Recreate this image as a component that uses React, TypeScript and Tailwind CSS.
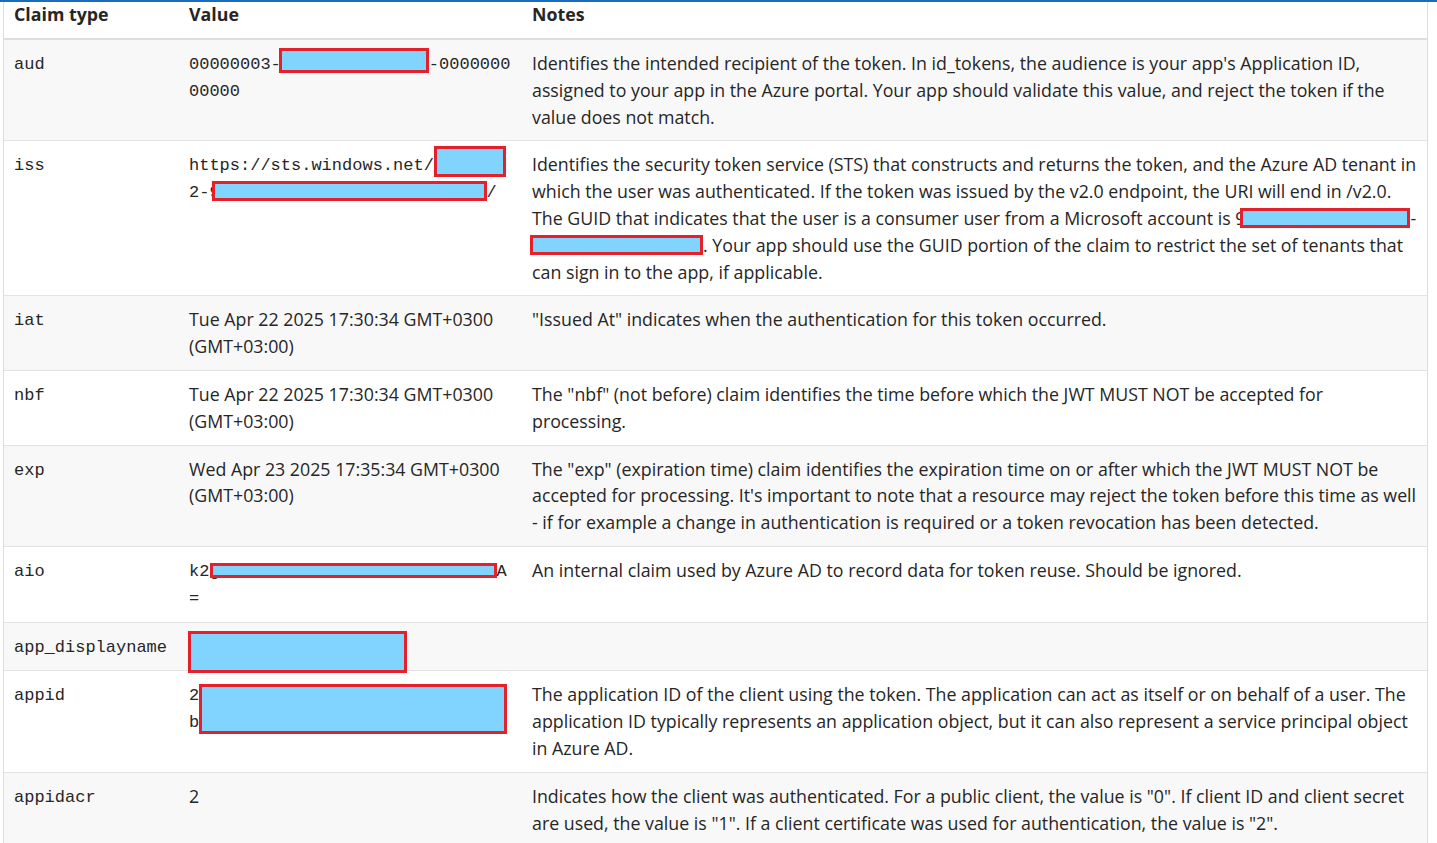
import React from "react";

const sans = "font-['Open_Sans',sans-serif] text-[17.8px]";
const mono = "font-['Liberation_Mono',monospace] text-[17px]";

function Redact({ className }: { className: string }) {
  return (
    <span
      className={`inline-block align-top border-[3px] border-[#e5202a] bg-[#80d4ff] ${className}`}
    />
  );
}

function Lines({ children }: { children: React.ReactNode }) {
  return <div className="whitespace-nowrap">{children}</div>;
}

interface Row {
  claim: string;
  value: React.ReactNode;
  notes: React.ReactNode;
  valueMono?: boolean;
  extra?: string;
}

const rows: Row[] = [
  {
    claim: "aud",
    valueMono: true,
    value: (
      <>
        <Lines>
          00000003-
          <Redact className="-ml-[2px] mt-[-4px] h-[25px] w-[150px]" />
          -0000000
        </Lines>
        <Lines>00000</Lines>
      </>
    ),
    notes: (
      <>
        <Lines>
          Identifies the intended recipient of the token. In id_tokens, the audience is your app's Application ID,
        </Lines>
        <Lines>
          assigned to your app in the Azure portal. Your app should validate this value, and reject the token if the
        </Lines>
        <Lines>value does not match.</Lines>
      </>
    ),
  },
  {
    claim: "iss",
    valueMono: true,
    value: (
      <>
        <Lines>
          https://sts.windows.net/
          <Redact className="mt-[-7px] h-[31px] w-[72px]" />
        </Lines>
        <Lines>
          2-9
          <Redact className="-ml-[8px] mt-[1px] h-[20px] w-[275px]" />/
        </Lines>
      </>
    ),
    notes: (
      <>
        <Lines>
          Identifies the security token service (STS) that constructs and returns the token, and the Azure AD tenant in
        </Lines>
        <Lines>
          which the user was authenticated. If the token was issued by the v2.0 endpoint, the URI will end in /v2.0.
        </Lines>
        <Lines>
          The GUID that indicates that the user is a consumer user from a Microsoft account is 9
          <Redact className="-ml-[5px] mt-[3px] h-[20px] w-[170px]" />-
        </Lines>
        <Lines>
          <Redact className="-ml-[2px] mt-[3px] h-[20px] w-[173px]" />. Your app should use the GUID portion of the
          claim to restrict the set of tenants that
        </Lines>
        <Lines>can sign in to the app, if applicable.</Lines>
      </>
    ),
  },
  {
    claim: "iat",
    value: (
      <>
        <Lines>Tue Apr 22 2025 17:30:34 GMT+0300</Lines>
        <Lines>(GMT+03:00)</Lines>
      </>
    ),
    notes: <Lines>"Issued At" indicates when the authentication for this token occurred.</Lines>,
  },
  {
    claim: "nbf",
    value: (
      <>
        <Lines>Tue Apr 22 2025 17:30:34 GMT+0300</Lines>
        <Lines>(GMT+03:00)</Lines>
      </>
    ),
    notes: (
      <>
        <Lines>
          The "nbf" (not before) claim identifies the time before which the JWT MUST NOT be accepted for
        </Lines>
        <Lines>processing.</Lines>
      </>
    ),
  },
  {
    claim: "exp",
    value: (
      <>
        <Lines>Wed Apr 23 2025 17:35:34 GMT+0300</Lines>
        <Lines>(GMT+03:00)</Lines>
      </>
    ),
    notes: (
      <>
        <Lines>
          The "exp" (expiration time) claim identifies the expiration time on or after which the JWT MUST NOT be
        </Lines>
        <Lines>
          accepted for processing. It's important to note that a resource may reject the token before this time as well
        </Lines>
        <Lines>
          - if for example a change in authentication is required or a token revocation has been detected.
        </Lines>
      </>
    ),
  },
  {
    claim: "aio",
    valueMono: true,
    extra: "pb-[9px]",
    value: (
      <>
        <Lines>
          k2g
          <Redact className="-ml-[10px] mt-[4px] h-[15px] w-[287px]" />A
        </Lines>
        <Lines>=</Lines>
      </>
    ),
    notes: (
      <Lines>An internal claim used by Azure AD to record data for token reuse. Should be ignored.</Lines>
    ),
  },
  {
    claim: "app_displayname",
    extra: "pb-[11px]",
    value: (
      <Lines>
        <Redact className="-ml-[1px] mt-[-2px] mb-[-14px] h-[42px] w-[219px]" />
      </Lines>
    ),
    notes: null,
  },
  {
    claim: "appid",
    valueMono: true,
    value: (
      <>
        <Lines>
          2
          <Redact className="mt-[1px] mb-[-25px] h-[50px] w-[308px]" />
        </Lines>
        <Lines>b</Lines>
      </>
    ),
    notes: (
      <>
        <Lines>
          The application ID of the client using the token. The application can act as itself or on behalf of a user. The
        </Lines>
        <Lines>
          application ID typically represents an application object, but it can also represent a service principal object
        </Lines>
        <Lines>in Azure AD.</Lines>
      </>
    ),
  },
  {
    claim: "appidacr",
    value: <Lines>2</Lines>,
    notes: (
      <>
        <Lines>
          Indicates how the client was authenticated. For a public client, the value is "0". If client ID and client secret
        </Lines>
        <Lines>
          are used, the value is "1". If a client certificate was used for authentication, the value is "2".
        </Lines>
      </>
    ),
  },
];

export default function App() {
  return (
    <div className={`h-[843px] w-[1437px] overflow-hidden bg-white text-[#262626] ${sans}`}>
      <div className="h-[2px] bg-[#1a6cc0]" />
      <div className="ml-[3px] w-[1425px] border-x border-[#dddddd]">
        <div className="grid grid-cols-[174px_343px_1fr] border-b-2 border-[#dedede] pb-[12px] font-bold leading-[24px]">
          <div className="pl-[10px]">Claim type</div>
          <div className="pl-[11px]">Value</div>
          <div className="pl-[11px]">Notes</div>
        </div>
        {rows.map((r, i) => (
          <div
            key={r.claim}
            className={`grid grid-cols-[174px_343px_1fr] border-b border-[#e2e2e2] leading-[26.8px] ${
              i % 2 === 0 ? "bg-[#f8f8f8]" : "bg-white"
            }`}
          >
            <div className={`pt-[12px] pb-[8px] pl-[10px] ${mono}`}>{r.claim}</div>
            <div
              className={`pl-[11px] ${r.valueMono ? `pt-[12px] pb-[8px] ${mono}` : "pt-[10px] pb-[10px]"} ${r.extra ?? ""}`}
            >
              {r.value}
            </div>
            <div className="py-[10px] pl-[11px]">{r.notes}</div>
          </div>
        ))}
        <div className="h-[60px] bg-white" />
      </div>
    </div>
  );
}
